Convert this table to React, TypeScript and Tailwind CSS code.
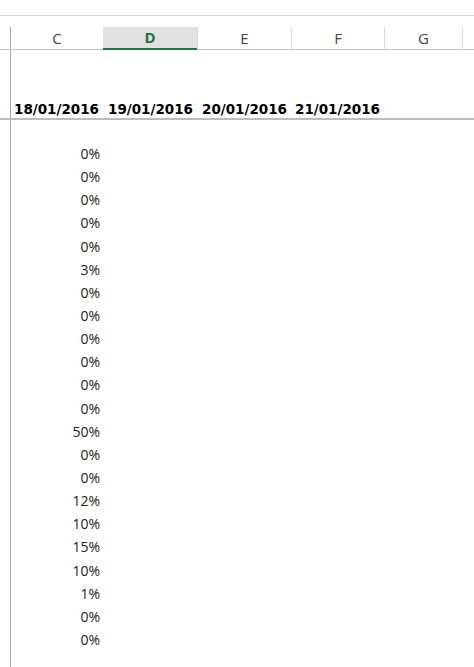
import React from "react";

// percentages shown in column C
const values = [
  "0%", "0%", "0%", "0%", "0%", "3%", "0%", "0%", "0%", "0%", "0%",
  "0%", "50%", "0%", "0%", "12%", "10%", "15%", "10%", "1%", "0%", "0%",
];

const dates = [
  { label: "18/01/2016", w: "w-[92px]" },
  { label: "19/01/2016", w: "w-[94px]" },
  { label: "20/01/2016", w: "w-[94px]" },
  { label: "21/01/2016", w: "w-[93px]" },
];

export default function App() {
  return (
    <div
      className="h-[667px] overflow-hidden bg-white flex flex-col"
      style={{ fontFamily: "'DejaVu Sans', 'Liberation Sans', sans-serif" }}
    >
      {/* formula bar edge */}
      <div className="h-[15px] shrink-0" />
      <div className="h-px shrink-0 bg-[#d6d6d6]" />
      <div className="h-[11px] shrink-0" />

      {/* Column headers */}
      <div className="flex h-[23px] shrink-0 border-b border-[#c6c6c6]">
        <div className="w-[10px] shrink-0" />
        <div
          className="flex flex-1 border-l border-[#ababab] text-[15px] text-[#444]"
          style={{ fontFamily: "'Open Sans', 'Liberation Sans', sans-serif" }}
        >
          <div className="w-[92px] shrink-0 flex items-center justify-center">C</div>
          <div className="w-[94px] shrink-0 flex items-center justify-center bg-[#e1e1e1] border-b-2 border-[#217346] font-bold text-[#217346] -mb-px">
            D
          </div>
          <div className="w-[94px] shrink-0 flex items-center justify-center border-l border-[#dadada]">E</div>
          <div className="w-[93px] shrink-0 flex items-center justify-center border-l border-[#dadada]">F</div>
          <div className="w-[78px] shrink-0 flex items-center justify-center border-l border-[#dadada]">G</div>
          <div className="flex-1 border-l border-[#dadada]" />
        </div>
      </div>

      {/* Date header row */}
      <div className="flex h-[70px] shrink-0 border-b-2 border-[#bcbcbc]">
        <div className="w-[10px] shrink-0" />
        <div className="flex flex-1 items-end border-l border-[#ababab] text-[13.5px] font-bold text-black">
          {dates.map((d) => (
            <div key={d.label} className={`${d.w} shrink-0 text-right pr-[4px] leading-[18px]`}>
              {d.label}
            </div>
          ))}
        </div>
      </div>

      {/* Data rows */}
      <div className="flex flex-1">
        <div className="w-[10px] shrink-0" />
        <div
          className="flex-1 border-l border-[#ababab] text-[14px] text-[#222]"
          style={{ fontFamily: "'Open Sans', 'Liberation Sans', sans-serif" }}
        >
          <div className="h-[22px]" />
          {values.map((v, i) => (
            <div key={i} className="w-[92px] h-[23.15px] leading-[23px] text-right pr-[3px]">
              {v}
            </div>
          ))}
        </div>
      </div>
    </div>
  );
}
